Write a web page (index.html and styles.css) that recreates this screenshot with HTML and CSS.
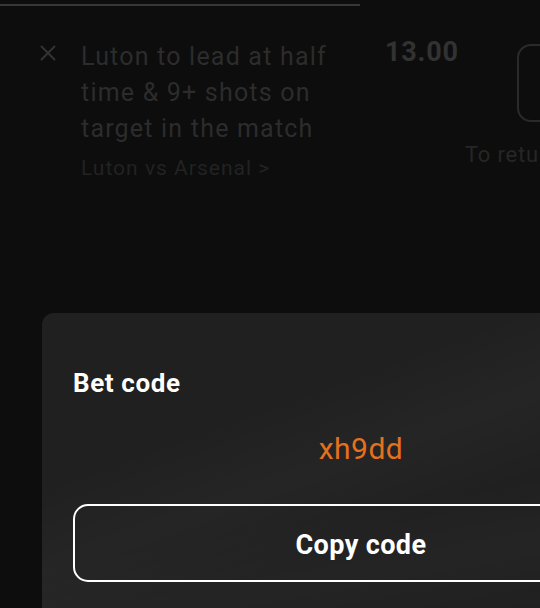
FILE: index.html
```html
<!DOCTYPE html>
<html lang="en">
<head>
  <meta charset="UTF-8" />
  <title>Bet slip</title>
  <link rel="stylesheet" href="styles.css">
</head>
<body>

  <!-- Bet slip (dimmed behind the sheet) -->
  <div class="slip">
    <div class="slip-rule"></div>

    <div class="selection">
      <span class="remove">
        <svg width="18" height="18" viewBox="0 0 18 18">
          <path d="M2 2 L16 16 M16 2 L2 16" stroke="#333" stroke-width="2" fill="none"/>
        </svg>
      </span>
      <div class="selection-info">
        <div class="selection-name">Luton to lead at half time &amp; 9+ shots on target in the match</div>
        <div class="selection-event">Luton vs Arsenal &gt;</div>
      </div>
      <div class="odds">13.00</div>
      <div class="stake">
        <div class="stake-box"></div>
        <div class="stake-label">To return</div>
      </div>
    </div>
  </div>

  <!-- Bet code sheet -->
  <div class="sheet">
    <div class="sheet-title">Bet code</div>
    <div class="code">xh9dd</div>
    <button class="copy-btn">Copy code</button>
  </div>

</body>
</html>
```

FILE: styles.css
```css
* {
  box-sizing: border-box;
  margin: 0;
  padding: 0;
}

body {
  font-family: 'Roboto', 'Open Sans', sans-serif;
  background: #0d0d0d;
  width: 540px;
  height: 608px;
  overflow: hidden;
  position: relative;
}

/* Bet slip */
.slip {
  width: 540px;
}

.slip-rule {
  width: 360px;
  height: 2px;
  margin-top: 4px;
  background: #383838;
}

.selection {
  display: flex;
  align-items: flex-start;
  padding: 38px 0 0 39px;
  width: 800px;
}

.remove {
  width: 18px;
  height: 18px;
  margin-top: 0;
  flex-shrink: 0;
}

.selection-info {
  width: 270px;
  margin-left: 24px;
  flex-shrink: 0;
}

.selection-name {
  font-size: 25px;
  letter-spacing: 1.2px;
  line-height: 36px;
  color: #2c2c2c;
  margin-top: -5px;
}

.selection-event {
  font-size: 21px;
  letter-spacing: 1px;
  line-height: 28px;
  color: #222;
  margin-top: 7px;
}

.odds {
  font-size: 27px;
  font-weight: 700;
  letter-spacing: 0.8px;
  color: #323232;
  margin-left: 34px;
  margin-top: -8px;
  width: 80px;
  flex-shrink: 0;
}

.stake {
  flex-shrink: 0;
}

.stake-box {
  width: 160px;
  height: 78px;
  margin-left: 52px;
  border: 2px solid #2a2a2a;
  border-radius: 14px;
}

.stake-label {
  font-size: 22px;
  letter-spacing: 0.8px;
  color: #262626;
  margin-top: 20px;
  white-space: nowrap;
}

/* Sheet */
.sheet {
  position: absolute;
  left: 42px;
  top: 313px;
  width: 638px;
  height: 340px;
  border-radius: 12px;
  background:
    linear-gradient(160deg, rgba(255,255,255,0) 30%, rgba(255,255,255,0.025) 45%, rgba(255,255,255,0) 60%),
    linear-gradient(170deg, rgba(255,255,255,0) 55%, rgba(255,255,255,0.02) 70%, rgba(255,255,255,0) 85%),
    #202020;
  padding: 54px 31px 0 31px;
  display: flex;
  flex-direction: column;
}

.sheet-title {
  font-size: 26px;
  font-weight: 700;
  letter-spacing: 0.6px;
  color: #fff;
  line-height: 32px;
}

.code {
  text-align: center;
  font-size: 30px;
  letter-spacing: 0.5px;
  color: #e5701e;
  margin-top: 32px;
  line-height: 36px;
}

.copy-btn {
  margin-top: 37px;
  height: 78px;
  width: 100%;
  background: transparent;
  border: 2px solid #fff;
  border-radius: 15px;
  color: #fff;
  font-family: inherit;
  font-size: 27px;
  font-weight: 700;
  letter-spacing: 0.4px;
  padding-top: 4px;
}
```
